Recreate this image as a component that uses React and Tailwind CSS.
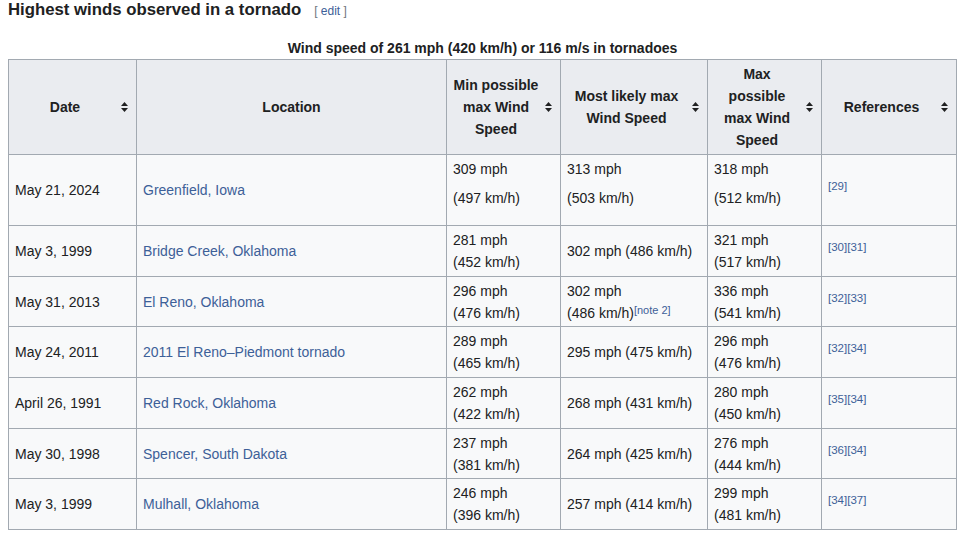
import React from "react";

const link = "text-[#3d6098]";

function SortIcon() {
  return (
    <svg width="7" height="10" viewBox="0 0 7 10" className="absolute right-[8px] top-1/2 -translate-y-1/2">
      <path d="M3.5 0 L7 4 L0 4 Z" fill="#202122" />
      <path d="M3.5 10 L7 6 L0 6 Z" fill="#202122" />
    </svg>
  );
}

function Th({ children, w }) {
  return (
    <th className={`relative border border-[#a2a9b1] bg-[#eaecf0] pl-[6px] pr-[21px] py-[3px] text-center font-bold align-middle ${w}`}>
      {children}
      <SortIcon />
    </th>
  );
}

function Refs({ items }) {
  return (
    <sup className={`${link} text-[11.5px] relative -top-[5px] align-baseline leading-none`}>
      {items.map((r) => `[${r}]`).join("")}
    </sup>
  );
}

const rows = [
  { date: "May 21, 2024", loc: "Greenfield, Iowa", min: ["309 mph", "(497 km/h)"], mid: ["313 mph", "(503 km/h)"], max: ["318 mph", "(512 km/h)"], refs: ["29"], tall: true, h: "h-[71px]" },
  { date: "May 3, 1999", loc: "Bridge Creek, Oklahoma", min: ["281 mph", "(452 km/h)"], mid: ["302 mph (486 km/h)"], max: ["321 mph", "(517 km/h)"], refs: ["30", "31"], h: "h-[51px]" },
  { date: "May 31, 2013", loc: "El Reno, Oklahoma", min: ["296 mph", "(476 km/h)"], mid: ["302 mph", "(486 km/h)"], note: true, max: ["336 mph", "(541 km/h)"], refs: ["32", "33"], h: "h-[50px]" },
  { date: "May 24, 2011", loc: "2011 El Reno–Piedmont tornado", min: ["289 mph", "(465 km/h)"], mid: ["295 mph (475 km/h)"], max: ["296 mph", "(476 km/h)"], refs: ["32", "34"], h: "h-[51px]" },
  { date: "April 26, 1991", loc: "Red Rock, Oklahoma", min: ["262 mph", "(422 km/h)"], mid: ["268 mph (431 km/h)"], max: ["280 mph", "(450 km/h)"], refs: ["35", "34"], h: "h-[51px]" },
  { date: "May 30, 1998", loc: "Spencer, South Dakota", min: ["237 mph", "(381 km/h)"], mid: ["264 mph (425 km/h)"], max: ["276 mph", "(444 km/h)"], refs: ["36", "34"], h: "h-[50px]" },
  { date: "May 3, 1999", loc: "Mulhall, Oklahoma", min: ["246 mph", "(396 km/h)"], mid: ["257 mph (414 km/h)"], max: ["299 mph", "(481 km/h)"], refs: ["34", "37"], h: "h-[51px]" },
];

function Speed({ lines, tall, note }) {
  if (lines.length === 1) return <div className="whitespace-nowrap">{lines[0]}</div>;
  return (
    <div className={tall ? "pb-[13px]" : ""}>
      <div className="whitespace-nowrap">{lines[0]}</div>
      <div className={`whitespace-nowrap ${tall ? "mt-[7px]" : ""}`}>
        {lines[1]}
        {note && (
          <sup className={`${link} text-[11px] relative -top-[4px] align-baseline leading-none`}>[note 2]</sup>
        )}
      </div>
    </div>
  );
}

const td = "border border-[#a2a9b1] bg-[#f8f9fa] px-[6px] py-0 align-middle";

export default function App() {
  return (
    <div className="bg-white w-[960px] h-[534px] overflow-hidden text-[#202122] font-['Liberation_Sans',Arial,sans-serif]">
      <div className="pl-[8px] pt-[0px] flex items-baseline h-[22px]">
        <h2 className="font-bold text-[16.75px] leading-[20px]">Highest winds observed in a tornado</h2>
        <span className="ml-[13px] text-[12px] text-[#72777d]">
          [ <span className={link}>edit</span> ]
        </span>
      </div>
      <div className="pl-[8px] pt-[15px]">
        <table className="border-collapse w-[948px] text-[14px] leading-[22px] table-fixed">
          <caption className="font-bold text-[14px] leading-[22px] pb-0">
            Wind speed of 261 mph (420 km/h) or 116 m/s in tornadoes
          </caption>
          <colgroup>
            <col className="w-[128px]" />
            <col className="w-[310px]" />
            <col className="w-[114px]" />
            <col className="w-[147px]" />
            <col className="w-[114px]" />
            <col className="w-[135px]" />
          </colgroup>
          <thead>
            <tr className="h-[94px]">
              <Th w="">Date</Th>
              <th className="border border-[#a2a9b1] bg-[#eaecf0] px-[6px] py-[3px] text-center font-bold">Location</th>
              <Th w="">Min possible<br />max Wind<br />Speed</Th>
              <Th w="">Most likely max<br />Wind Speed</Th>
              <Th w="">Max<br />possible<br />max Wind<br />Speed</Th>
              <Th w="">References</Th>
            </tr>
          </thead>
          <tbody>
            {rows.map((r, i) => (
              <tr key={i} className={r.h}>
                <td className={`${td} whitespace-nowrap`}>{r.date}</td>
                <td className={`${td} ${link} whitespace-nowrap`}>{r.loc}</td>
                <td className={td}><Speed lines={r.min} tall={r.tall} /></td>
                <td className={td}><Speed lines={r.mid} tall={r.tall} note={r.note} /></td>
                <td className={td}><Speed lines={r.max} tall={r.tall} /></td>
                <td className={td}><Refs items={r.refs} /></td>
              </tr>
            ))}
          </tbody>
        </table>
      </div>
    </div>
  );
}
